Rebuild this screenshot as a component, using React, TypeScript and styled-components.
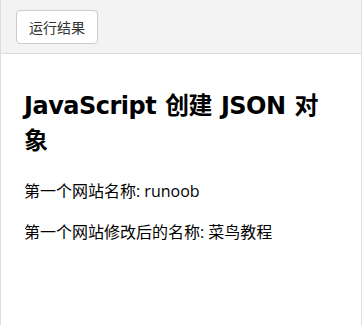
import React from "react";
import styled, { createGlobalStyle } from "styled-components";

const Global = createGlobalStyle`
  html, body { margin: 0; padding: 0; background: #fff; }
  body { font-family: "Noto Sans", "Noto Sans CJK SC", sans-serif; color: #000; }
`;

const Frame = styled.div`
  box-sizing: border-box;
  width: 362px;
  height: 325px;
  border-left: 1px solid #ddd;
  border-right: 1px solid #ddd;
  display: flex;
  flex-direction: column;
`;

const Toolbar = styled.div`
  box-sizing: border-box;
  flex: none;
  height: 54px;
  background: #f3f3f3;
  border-bottom: 1px solid #ddd;
  display: flex;
  align-items: flex-start;
  padding: 10px 15px 0;
`;

const Button = styled.button`
  box-sizing: border-box;
  height: 34px;
  padding: 0 12px;
  background: #fff;
  border: 1px solid #ccc;
  border-radius: 4px;
  font-family: "Noto Sans CJK SC", sans-serif;
  font-size: 14px;
  color: #333;
  line-height: 32px;
`;

const Content = styled.div`
  padding: 0 23px;
`;

const Heading = styled.h2`
  margin: 35px 0 20px;
  font-family: "DejaVu Sans", "Noto Sans CJK SC", sans-serif;
  font-weight: bold;
  font-size: 24px;
  line-height: 35px;
  letter-spacing: -0.5px;
  word-spacing: 1px;
`;

const Para = styled.p`
  margin: 0 0 16px;
  font-size: 16px;
  line-height: 25px;
  font-family: "Open Sans", "Noto Sans CJK SC", sans-serif;
`;

export default function App() {
  return (
    <>
      <Global />
      <Frame>
        <Toolbar>
          <Button>运行结果</Button>
        </Toolbar>
        <Content>
          <Heading>JavaScript 创建 JSON 对象</Heading>
          <Para>第一个网站名称: runoob</Para>
          <Para>第一个网站修改后的名称: 菜鸟教程</Para>
        </Content>
      </Frame>
    </>
  );
}
